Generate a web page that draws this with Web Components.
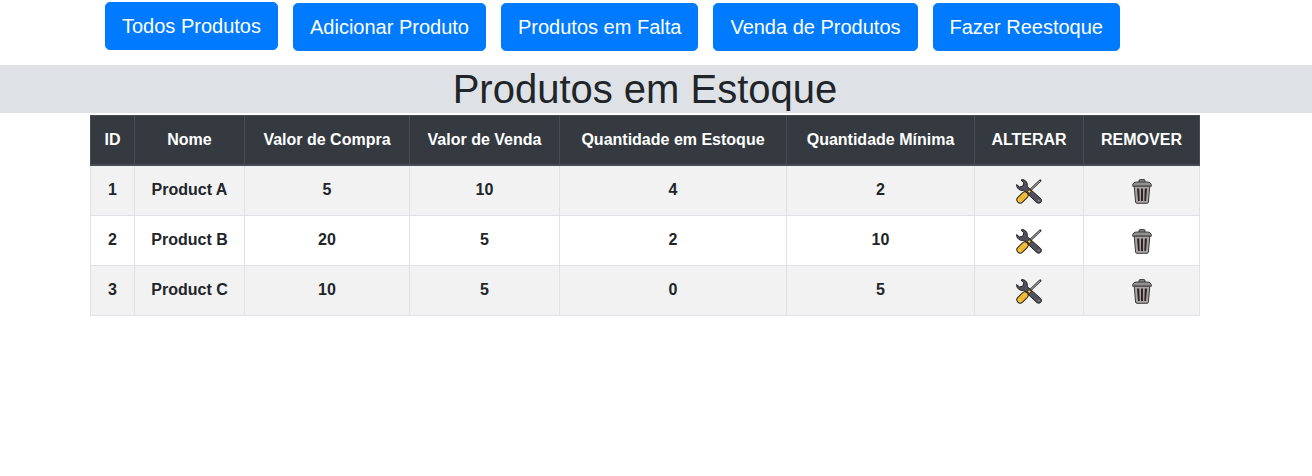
<!DOCTYPE html>
<html lang="pt">
<head>
<meta charset="utf-8">
<title>Produtos em Estoque</title>
<style>
  html, body { margin: 0; background: #fff; }
  body { font-family: "Liberation Sans", Arial, sans-serif; color: #212529; }
</style>
</head>
<body>
<nav-bar>
  <nav-btn class="first">Todos Produtos</nav-btn>
  <nav-btn>Adicionar Produto</nav-btn>
  <nav-btn>Produtos em Falta</nav-btn>
  <nav-btn>Venda de Produtos</nav-btn>
  <nav-btn>Fazer Reestoque</nav-btn>
</nav-bar>
<page-title>Produtos em Estoque</page-title>
<stock-table></stock-table>

<script>
class NavBar extends HTMLElement {
    constructor() {
        super();
        this.attachShadow({ mode: 'open' });
        this.shadowRoot.innerHTML = `
            <style>
                :host { display: flex; align-items: flex-start; gap: 15px; padding: 2px 0 0 105px; height: 63px; }
                ::slotted(nav-btn:not(.first)) { margin-top: 1px; }
            </style>
            <slot></slot>
        `;
    }
}

class NavBtn extends HTMLElement {
    constructor() {
        super();
        this.attachShadow({ mode: 'open' });
        this.shadowRoot.innerHTML = `
            <style>
                :host { display: block; background: #007bff; color: #fff; border: 1px solid #007bff; border-radius: 4.8px;
                    padding: 8px 16px; font-size: 20px; line-height: 30px; white-space: nowrap; cursor: pointer; }
            </style>
            <slot></slot>
        `;
    }
}

class PageTitle extends HTMLElement {
    constructor() {
        super();
        this.attachShadow({ mode: 'open' });
        this.shadowRoot.innerHTML = `
            <style>
                :host { display: block; background: #dee2e6; height: 48px; padding-right: 22px; text-align: center;
                    font-size: 40px; line-height: 48px; font-weight: 400; color: #212529; }
            </style>
            <slot></slot>
        `;
    }
}

class ToolIcon extends HTMLElement {
    constructor() {
        super();
        this.attachShadow({ mode: 'open' });
        this.shadowRoot.innerHTML = `
            <style>:host { display: block; width: 26px; height: 25px; margin: 1px auto 0; } svg { display: block; }</style>
            <svg width="26" height="25" viewBox="0 0 26 25">
                <path d="M6 .6C8.6 .6 10.8 2.4 11.2 4.8 11.4 5.8 11.4 6.8 11.2 7.6L24.9 19.7C25.8 20.8 25.7 22.4 24.6 23.4 23.6 24.4 22 24.4 20.9 23.6L7.8 11.3C6.8 11.6 5.6 11.6 4.5 11.2 2 10.4.5 8.2.6 5.6L3.6 8 7 7 7.8 3.6 5 1.2Z" fill="#50515c" stroke="#222" stroke-width="1" stroke-linejoin="round"/>
                <circle cx="22.8" cy="21.6" r=".9" fill="#8d8d95"/>
                <path d="M15 10.4 24.2 1.6" stroke="#333" stroke-width="2.4" stroke-linecap="round"/>
                <path d="M15 10.4 24 1.8" stroke="#c4c4c8" stroke-width="1"/>
                <path d="M13.2 10.6 15.2 12.6 13.4 14.6 11 12.4Z" fill="#f7c135" stroke="#222" stroke-width=".9" stroke-linejoin="round"/>
                <path d="M4.2 20.8 8.8 16.2" stroke="#222" stroke-width="7.6" stroke-linecap="round"/>
                <path d="M4.2 20.8 8.8 16.2" stroke="#f7c135" stroke-width="5.6" stroke-linecap="round"/>
                <path d="M3.8 19.8 7.4 16.2M5.4 21.4 9 17.8" stroke="#c8921c" stroke-width=".7" fill="none"/>
            </svg>
        `;
    }
}

class TrashIcon extends HTMLElement {
    constructor() {
        super();
        this.attachShadow({ mode: 'open' });
        this.shadowRoot.innerHTML = `
            <style>:host { display: block; width: 20px; height: 25px; margin: 1px auto 0; } svg { display: block; }</style>
            <svg width="20" height="25" viewBox="0 0 20 25">
                <path d="M7 3V1.6C7 1 7.5 .6 8 .6H12C12.5 .6 13 1 13 1.6V3" fill="#8a8a8a" stroke="#3a3a3a" stroke-width="1"/>
                <path d="M.6 6.6C.6 4.4 2.4 3 4.5 3H15.5C17.6 3 19.4 4.4 19.4 6.6V7.2H.6Z" fill="#939090" stroke="#3a3a3a" stroke-width="1"/>
                <path d="M2.2 7.2H17.8L16.4 23C16.3 23.8 15.8 24.3 15 24.3H5C4.2 24.3 3.7 23.8 3.6 23Z" fill="#aca3a5" stroke="#3a3a3a" stroke-width="1"/>
                <path d="M5 9.4H7.2L7.7 22H6ZM9 9.4H11V22H9ZM12.8 9.4H15L14 22H12.3Z" fill="#2a2626"/>
            </svg>
        `;
    }
}

class StockTable extends HTMLElement {
    constructor() {
        super();
        this.attachShadow({ mode: 'open' });
        this._headers = ['ID', 'Nome', 'Valor de Compra', 'Valor de Venda', 'Quantidade em Estoque', 'Quantidade Mínima', 'ALTERAR', 'REMOVER'];
        this._widths = [44, 110, 165, 150, 227, 188, 109, 116];
        this._rows = [
            [1, 'Product A', 5, 10, 4, 2],
            [2, 'Product B', 20, 5, 2, 10],
            [3, 'Product C', 10, 5, 0, 5]
        ];
    }

    connectedCallback() { this.render(); }

    render() {
        const cols = this._widths.map(w => `<col style="width:${w}px">`).join('');
        const head = this._headers.map(h => `<th>${h}</th>`).join('');
        const rows = this._rows.map(r => `
            <tr>
                ${r.map(v => `<td>${v}</td>`).join('')}
                <td class="icon"><tool-icon></tool-icon></td>
                <td class="icon"><trash-icon></trash-icon></td>
            </tr>`).join('');

        this.shadowRoot.innerHTML = `
            <style>
                :host { display: block; margin: 2px 0 0 90px; width: 1110px; }
                table { border-collapse: collapse; table-layout: fixed; width: 1110px; font-size: 16px; line-height: 24px; color: #212529; }
                th, td { padding: 12px 0; text-align: center; vertical-align: top; font-weight: 700; border: 1px solid #dee2e6; }
                th { height: 24px; background: #343a40; color: #fff; border-color: #454d55; border-bottom-width: 2px; }
                td { height: 25px; }
                td.icon { padding-bottom: 11px; }
                tbody tr:nth-child(odd) td { background: #f2f2f2; }
            </style>
            <table>
                <colgroup>${cols}</colgroup>
                <thead><tr>${head}</tr></thead>
                <tbody>${rows}</tbody>
            </table>
        `;
    }
}

customElements.define('nav-bar', NavBar);
customElements.define('nav-btn', NavBtn);
customElements.define('page-title', PageTitle);
customElements.define('tool-icon', ToolIcon);
customElements.define('trash-icon', TrashIcon);
customElements.define('stock-table', StockTable);
</script>
</body>
</html>
